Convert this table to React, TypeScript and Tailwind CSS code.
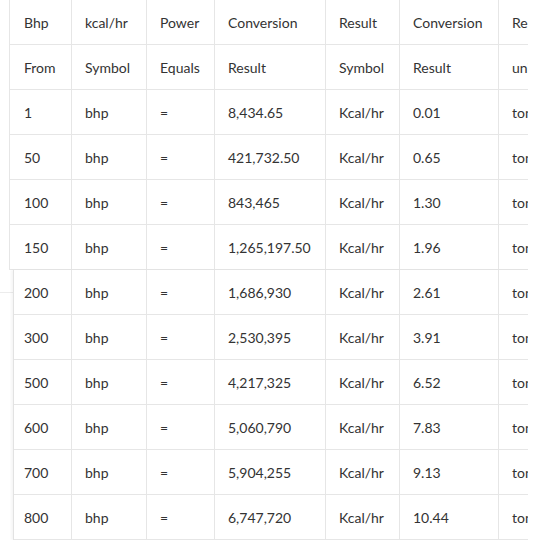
import React from 'react';

type Row = [string, string, string, string, string, string, string];

const headRows: Row[] = [
  ['Bhp', 'kcal/hr', 'Power', 'Conversion', 'Result', 'Conversion', 'Result'],
  ['From', 'Symbol', 'Equals', 'Result', 'Symbol', 'Result', 'unit'],
];

const topRows: Row[] = [
  ['1', 'bhp', '=', '8,434.65', 'Kcal/hr', '0.01', 'ton'],
  ['50', 'bhp', '=', '421,732.50', 'Kcal/hr', '0.65', 'ton'],
  ['100', 'bhp', '=', '843,465', 'Kcal/hr', '1.30', 'ton'],
  ['150', 'bhp', '=', '1,265,197.50', 'Kcal/hr', '1.96', 'ton'],
];

const bottomRows: Row[] = [
  ['200', 'bhp', '=', '1,686,930', 'Kcal/hr', '2.61', 'ton'],
  ['300', 'bhp', '=', '2,530,395', 'Kcal/hr', '3.91', 'ton'],
  ['500', 'bhp', '=', '4,217,325', 'Kcal/hr', '6.52', 'ton'],
  ['600', 'bhp', '=', '5,060,790', 'Kcal/hr', '7.83', 'ton'],
  ['700', 'bhp', '=', '5,904,255', 'Kcal/hr', '9.13', 'ton'],
  ['800', 'bhp', '=', '6,747,720', 'Kcal/hr', '10.44', 'ton'],
];

const restWidths = ['w-[75px]', 'w-[68px]', 'w-[111px]', 'w-[74px]', 'w-[99px]', 'w-[80px]'];

function TableRow({ row, shifted }: { row: Row; shifted?: boolean }) {
  return (
    <div className="flex h-[45px] border-b border-[#e6e6e6]">
      <div
        className={`flex shrink-0 items-center border-r border-[#e6e6e6] ${
          shifted ? 'w-[58px] pl-[10px]' : 'w-[62px] pl-[14px]'
        }`}
      >
        {row[0]}
      </div>
      {row.slice(1).map((cell, i) => (
        <div
          key={i}
          className={`flex shrink-0 items-center whitespace-nowrap pl-[13px] ${restWidths[i]} ${
            i < 5 ? 'border-r border-[#e6e6e6]' : ''
          }`}
        >
          {cell}
        </div>
      ))}
    </div>
  );
}

export default function App() {
  return (
    <div
      className="h-[543px] w-[554px] overflow-hidden bg-white text-[14px] text-[#333333]"
      style={{ fontFamily: 'Lato, "Open Sans", sans-serif' }}
    >
      <div className="w-[528px] overflow-hidden">
        {/* upper part of the table */}
        <div className="ml-[9px] border-l border-[#e6e6e6]">
          {headRows.map((row, i) => (
            <TableRow key={'h' + i} row={row} />
          ))}
          {topRows.map((row, i) => (
            <TableRow key={'t' + i} row={row} />
          ))}
        </div>

        {/* lower part, slightly offset */}
        <div className="flex">
          <div className="w-[13px] shrink-0">
            <div className="h-[23px] border-b border-[#ececec]" />
          </div>
          <div className="border-l border-[#e2e2e2] shadow-[-2px_0_2px_rgba(0,0,0,0.04)]">
            {bottomRows.map((row, i) => (
              <TableRow key={'b' + i} row={row} shifted />
            ))}
          </div>
        </div>
      </div>
    </div>
  );
}
